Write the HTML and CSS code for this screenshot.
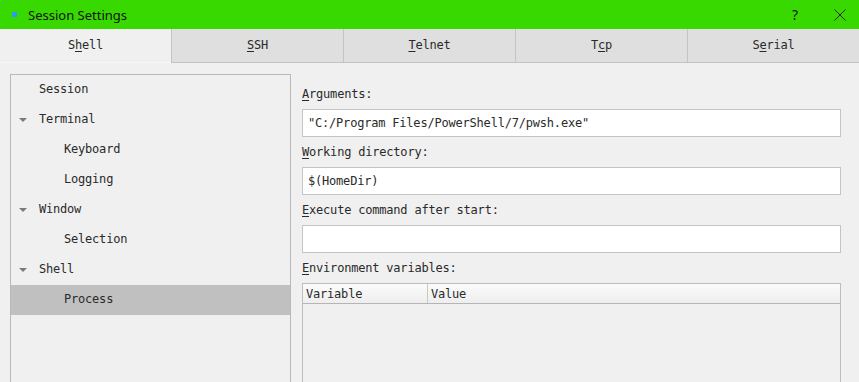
FILE: index.html
```html
<!DOCTYPE html>
<html lang="en">
  <head>
    <meta charset="UTF-8" />
    <title>Session Settings</title>
    <link rel="stylesheet" href="styles.css">
  </head>
  <body>
    <div class="window">
      <div class="titlebar">
        <span class="app-icon"></span>
        <span class="title">Session Settings</span>
        <span class="title-btn help">?</span>
        <span class="title-btn close">
          <svg width="12" height="12" viewBox="0 0 12 12">
            <path d="M0.5 0.5 L11.5 11.5 M11.5 0.5 L0.5 11.5" stroke="#222" stroke-width="1" fill="none" />
          </svg>
        </span>
      </div>

      <div class="tabs">
        <div class="tab active">S<u>h</u>ell</div>
        <div class="tab"><u>S</u>SH</div>
        <div class="tab"><u>T</u>elnet</div>
        <div class="tab">T<u>c</u>p</div>
        <div class="tab">S<u>e</u>rial</div>
      </div>

      <div class="content">
        <ul class="tree">
          <li class="node">Session</li>
          <li class="node"><span class="arrow"></span>Terminal</li>
          <li class="node child">Keyboard</li>
          <li class="node child">Logging</li>
          <li class="node"><span class="arrow"></span>Window</li>
          <li class="node child">Selection</li>
          <li class="node"><span class="arrow"></span>Shell</li>
          <li class="node child selected">Process</li>
        </ul>

        <div class="form">
          <div class="label"><u>A</u>rguments:</div>
          <div class="field">"C:/Program Files/PowerShell/7/pwsh.exe"</div>
          <div class="label"><u>W</u>orking directory:</div>
          <div class="field">$(HomeDir)</div>
          <div class="label"><u>E</u>xecute command after start:</div>
          <div class="field"></div>
          <div class="label"><u>E</u>nvironment variables:</div>
          <div class="env-table">
            <div class="env-head">
              <div class="col col-var">Variable</div>
              <div class="col col-val">Value</div>
            </div>
            <div class="env-body"></div>
          </div>
        </div>
      </div>
    </div>
  </body>
</html>
```

FILE: styles.css
```css
html,
body {
  margin: 0;
  padding: 0;
  width: 859px;
  height: 382px;
  overflow: hidden;
}

body {
  background: #f0f0f0;
  color: #2a2a2a;
  font-family: "DejaVu Sans Mono", "Liberation Mono", monospace;
  font-size: 12px;
  letter-spacing: -0.2px;
}

u {
  text-decoration: underline;
  text-underline-offset: 2px;
}

.window {
  display: flex;
  flex-direction: column;
  height: 382px;
}

/* title bar */
.titlebar {
  display: flex;
  align-items: center;
  height: 29px;
  background: #38d900;
  color: #111;
  font-family: "Noto Sans", sans-serif;
  font-size: 13px;
  letter-spacing: 0;
}

.app-icon {
  width: 5px;
  height: 5px;
  background: #2a9cf0;
  margin-left: 12px;
  margin-right: 11px;
}

.title {
  flex: 1;
}

.title-btn {
  display: flex;
  align-items: center;
  justify-content: center;
  height: 29px;
}

.help {
  width: 20px;
  margin-right: 23px;
  font-size: 14px;
}

.close {
  width: 24px;
  margin-right: 7px;
}

/* tabs */
.tabs {
  display: flex;
  height: 34px;
}

.tab {
  flex: 1;
  display: flex;
  align-items: center;
  justify-content: center;
  background: #dfdfdf;
  border-left: 1px solid #c4c4c4;
  border-bottom: 1px solid #c4c4c4;
  padding-bottom: 1px;
}

.tab.active {
  background: #f0f0f0;
  border-left: none;
  border-bottom: 1px solid #f6f6f6;
}

/* content */
.content {
  flex: 1;
  display: flex;
  gap: 11px;
  padding: 11px 18px 0 10px;
  min-height: 0;
}

.tree {
  list-style: none;
  margin: 0;
  padding: 0;
  width: 279px;
  border: 1px solid #b9b9b9;
  border-bottom: none;
}

.node {
  position: relative;
  height: 30px;
  line-height: 28px;
  padding-left: 28px;
}

.node.child {
  padding-left: 53px;
}

.node.selected {
  background: #c0c0c0;
}

.arrow {
  position: absolute;
  left: 8px;
  top: 13px;
  width: 0;
  height: 0;
  border-left: 4px solid transparent;
  border-right: 4px solid transparent;
  border-top: 4px solid #7a7a7a;
}

.form {
  flex: 1;
  display: flex;
  flex-direction: column;
  padding-top: 5px;
}

.label {
  height: 28px;
  line-height: 26px;
  margin-top: 2px;
}

.field {
  height: 26px;
  line-height: 26px;
  background: #fff;
  border: 1px solid #c4c4c4;
  padding-left: 5px;
}

.env-table {
  flex: 1;
  border: 1px solid #bdbdbd;
  border-bottom: none;
  display: flex;
  flex-direction: column;
}

.env-head {
  display: flex;
  height: 19px;
  background: linear-gradient(#fbfbfb, #eeeeee);
  border-bottom: 1px solid #b5b5b5;
}

.col {
  line-height: 20px;
  padding-left: 3px;
}

.col-var {
  width: 121px;
  border-right: 1px solid #c8c8c8;
}

.env-body {
  flex: 1;
}
```
